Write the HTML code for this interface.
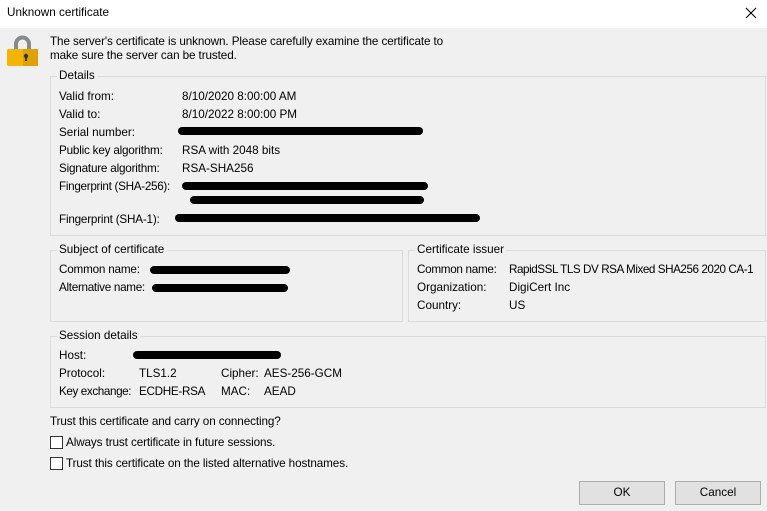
<!DOCTYPE html>
<html><head><meta charset="utf-8"><style>
*{margin:0;padding:0;box-sizing:border-box}
body{width:767px;height:511px;background:#f0f0f0;font-family:"Liberation Sans",sans-serif;font-size:11.7px;color:#000;position:relative;overflow:hidden}
.a{position:absolute;white-space:nowrap;line-height:14px}
.g{position:absolute;border:1px solid #dcdcdc}
.gt{position:absolute;background:#f0f0f0;padding:0 2px;line-height:14px}
.r{position:absolute;background:#000;height:8px;border-radius:4px}
.cb{position:absolute;width:13px;height:13px;border:1px solid #333;background:#fff}
.btn{position:absolute;border:1px solid #adadad;background:#e1e1e1;text-align:center;line-height:22px;height:24px}
</style></head><body>
<div style="position:absolute;left:0;top:0;width:767px;height:28px;background:#fff"></div>
<div class="a" style="left:7px;top:6px">Unknown certificate</div>
<svg style="position:absolute;left:744px;top:6px" width="14" height="14"><path d="M2 2L12 12M12 2L2 12" stroke="#000" stroke-width="1.1"/></svg>
<svg style="position:absolute;left:5px;top:34px" width="34" height="32"><path d="M11 15V10a6.5 6.5 0 0 1 13 0v5" fill="none" stroke="#8a8a8a" stroke-width="4"/><rect x="2" y="15" width="31" height="17" rx="2" fill="#f5b400"/><rect x="18" y="15" width="15" height="17" fill="#e0a200"/><circle cx="21" cy="22" r="2.2" fill="#333"/><rect x="20" y="22" width="2" height="5" fill="#333"/></svg>
<div class="a" style="left:50px;top:35px;letter-spacing:-0.1px">The server's certificate is unknown. Please carefully examine the certificate to</div>
<div class="a" style="left:50px;top:49px;letter-spacing:-0.1px">make sure the server can be trusted.</div>

<div class="g" style="left:50px;top:76px;width:716px;height:160px"></div>
<div class="gt" style="left:57px;top:69px">Details</div>
<div class="a" style="left:59px;top:90px">Valid from:</div><div class="a" style="left:182px;top:90px">8/10/2020 8:00:00 AM</div>
<div class="a" style="left:59px;top:108px">Valid to:</div><div class="a" style="left:182px;top:108px">8/10/2022 8:00:00 PM</div>
<div class="a" style="left:59px;top:126px">Serial number:</div><div class="r" style="left:178px;top:127px;width:245px"></div>
<div class="a" style="left:59px;top:144px;letter-spacing:-0.2px">Public key algorithm:</div><div class="a" style="left:182px;top:144px">RSA with 2048 bits</div>
<div class="a" style="left:59px;top:162px;letter-spacing:-0.2px">Signature algorithm:</div><div class="a" style="left:182px;top:162px">RSA-SHA256</div>
<div class="a" style="left:59px;top:180px;letter-spacing:-0.3px">Fingerprint (SHA-256):</div><div class="r" style="left:182px;top:182px;width:246px"></div><div class="r" style="left:190px;top:196px;width:234px"></div>
<div class="a" style="left:59px;top:213px;letter-spacing:-0.2px">Fingerprint (SHA-1):</div><div class="r" style="left:175px;top:214px;width:305px"></div>

<div class="g" style="left:50px;top:250px;width:353px;height:72px"></div>
<div class="gt" style="left:57px;top:243px">Subject of certificate</div>
<div class="a" style="left:59px;top:263px;letter-spacing:-0.2px">Common name:</div><div class="r" style="left:150px;top:266px;width:140px"></div>
<div class="a" style="left:59px;top:281px;letter-spacing:-0.3px">Alternative name:</div><div class="r" style="left:152px;top:284px;width:136px"></div>

<div class="g" style="left:408px;top:250px;width:358px;height:72px"></div>
<div class="gt" style="left:415px;top:243px">Certificate issuer</div>
<div class="a" style="left:417px;top:263px;letter-spacing:-0.3px">Common name:</div><div class="a" style="left:509px;top:263px;letter-spacing:-0.45px">RapidSSL TLS DV RSA Mixed SHA256 2020 CA-1</div>
<div class="a" style="left:417px;top:281px">Organization:</div><div class="a" style="left:509px;top:281px">DigiCert Inc</div>
<div class="a" style="left:417px;top:299px">Country:</div><div class="a" style="left:509px;top:299px">US</div>

<div class="g" style="left:50px;top:336px;width:716px;height:72px"></div>
<div class="gt" style="left:57px;top:329px">Session details</div>
<div class="a" style="left:59px;top:349px">Host:</div><div class="r" style="left:133px;top:351px;width:148px"></div>
<div class="a" style="left:59px;top:367px">Protocol:</div><div class="a" style="left:139px;top:367px">TLS1.2</div>
<div class="a" style="left:221px;top:367px">Cipher:</div><div class="a" style="left:264px;top:367px">AES-256-GCM</div>
<div class="a" style="left:59px;top:385px;letter-spacing:-0.4px">Key exchange:</div><div class="a" style="left:139px;top:385px;letter-spacing:-0.3px">ECDHE-RSA</div>
<div class="a" style="left:221px;top:385px">MAC:</div><div class="a" style="left:264px;top:385px">AEAD</div>

<div class="a" style="left:50px;top:415px;letter-spacing:-0.1px">Trust this certificate and carry on connecting?</div>
<div class="cb" style="left:50px;top:436px"></div><div class="a" style="left:66px;top:436px;letter-spacing:-0.1px">Always trust certificate in future sessions.</div>
<div class="cb" style="left:50px;top:457px"></div><div class="a" style="left:66px;top:457px;letter-spacing:-0.1px">Trust this certificate on the listed alternative hostnames.</div>

<div class="btn" style="left:579px;top:481px;width:86px">OK</div>
<div class="btn" style="left:675px;top:481px;width:86px">Cancel</div>
</body></html>
